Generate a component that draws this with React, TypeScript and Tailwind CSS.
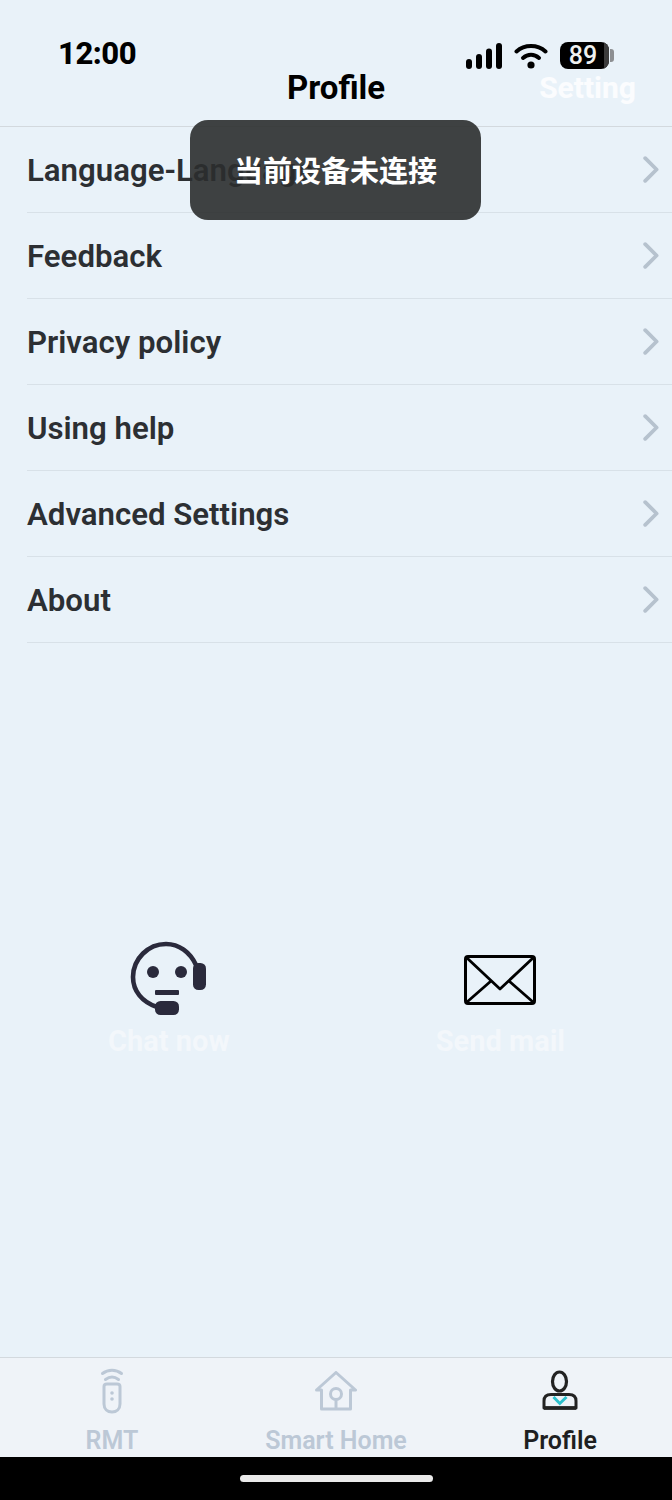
const rows = ["Language-Language", "Feedback", "Privacy policy", "Using help", "Advanced Settings", "About"];
const F = "font-['Roboto',sans-serif]";

function Chevron() {
  return (
    <svg width="16" height="27" viewBox="0 0 16 27" fill="none" stroke="#b6c2ce" strokeWidth="3.8" strokeLinecap="round" strokeLinejoin="round">
      <path d="M2.2 2.2L13.6 13.5L2.2 24.8" />
    </svg>
  );
}
function Signal() {
  return (
    <svg width="36" height="26" viewBox="0 0 36 26" fill="#000">
      <rect x="0" y="16" width="6" height="10" rx="3" />
      <rect x="10" y="11" width="6" height="15" rx="3" />
      <rect x="20" y="5.5" width="6" height="20.5" rx="3" />
      <rect x="30" y="0" width="6" height="26" rx="3" />
    </svg>
  );
}
function Wifi() {
  return (
    <svg width="34" height="26" viewBox="0 0 34 26" fill="none" stroke="#000" strokeLinecap="round">
      <path d="M2.5 8.5C10.5 1.2 23.5 1.2 31.5 8.5" strokeWidth="4" />
      <path d="M9 15C13.8 10.8 20.2 10.8 25 15" strokeWidth="4" />
      <circle cx="17" cy="22" r="3.6" fill="#000" stroke="none" />
    </svg>
  );
}
function Battery() {
  return (
    <div className="flex items-center">
      <div className={`relative flex h-[27px] w-[49px] items-center justify-center overflow-hidden rounded-[8px] bg-black ${F}`}>
        <span className="pr-[3px] text-[25px] font-medium leading-none text-[#eef0f0]">89</span>
        <div className="absolute right-0 top-0 h-full w-[5px] bg-[#3c3c3c]" />
      </div>
      <div className="ml-[1px] h-[13px] w-[4px] rounded-r-[3px] bg-[#8d8f92]" />
    </div>
  );
}
function Agent() {
  return (
    <svg width="78" height="76" viewBox="0 0 78 76" fill="none">
      <path d="M66 24C60 11 49 3 36 3C18 3 3 18 3 36C3 50 12 61 27 66" stroke="#2a2a3c" strokeWidth="4.6" strokeLinecap="round" />
      <rect x="63" y="22" width="13" height="27" rx="5.5" fill="#2a2a3c" />
      <circle cx="23" cy="31" r="6" fill="#2a2a3c" />
      <circle cx="51" cy="31" r="6" fill="#2a2a3c" />
      <rect x="25" y="49" width="24" height="5" rx="1" fill="#2a2a3c" />
      <rect x="25" y="60" width="24" height="14" rx="5.5" fill="#2a2a3c" />
    </svg>
  );
}
function Mail() {
  return (
    <svg width="72" height="50" viewBox="0 0 72 50" fill="none" stroke="#000" strokeLinejoin="round">
      <rect x="1.5" y="1.5" width="69" height="47" rx="2.5" strokeWidth="3" />
      <path d="M3 3L36 34L69 3" strokeWidth="2.8" />
      <path d="M27 26L3 47M45 26L69 47" strokeWidth="2.8" />
    </svg>
  );
}
function Remote() {
  return (
    <svg width="26" height="46" viewBox="0 0 26 46" fill="none" stroke="#bcc8d6" strokeWidth="3" strokeLinecap="round">
      <path d="M3.5 5.5C9 1 17 1 22.5 5.5" />
      <path d="M6.5 11.5C10.5 8.5 15.5 8.5 19.5 11.5" />
      <path d="M5 18.5C5 16.5 6 16 8 16H18C20 16 21 16.5 21 18.5V36C21 41 17.5 44 13 44C8.5 44 5 41 5 36Z" />
      <circle cx="13" cy="25" r="1.8" fill="#bcc8d6" stroke="none" />
      <circle cx="13" cy="31" r="1.8" fill="#bcc8d6" stroke="none" />
    </svg>
  );
}
function House() {
  return (
    <svg width="42" height="40" viewBox="0 0 42 40" fill="none" stroke="#bcc8d6" strokeWidth="3" strokeLinejoin="round">
      <path d="M1.5 19L21 1.5L40.5 19H35.5V38H6.5V19Z" />
      <circle cx="21" cy="23" r="5.5" />
      <path d="M21 28.5V38" />
    </svg>
  );
}
function Person() {
  return (
    <svg width="36" height="42" viewBox="0 0 36 42" fill="none">
      <ellipse cx="17.5" cy="11.5" rx="7" ry="9.5" stroke="#222" strokeWidth="3.2" />
      <path d="M2 38V31C2 26.5 5 24.5 9 24.5H27C31 24.5 34 26.5 34 31V38Z" stroke="#222" strokeWidth="3" strokeLinejoin="round" />
      <path d="M2 38H34" stroke="#222" strokeWidth="3.6" />
      <path d="M11.5 27L17.8 33.5L24.5 27" stroke="#2cc0cc" strokeWidth="3" />
    </svg>
  );
}

export default function App() {
  return (
    <div className={`relative flex h-[1500px] w-[672px] flex-col overflow-hidden bg-[#e9f2f9] ${F}`}>
      <header className="relative flex h-[127px] shrink-0 flex-col border-b border-[#d3d9de]">
        <div className="flex h-[69px] items-end justify-between pl-[58px] pr-[58px]">
          <span className="text-[31px] font-extrabold leading-[30px] tracking-[-0.5px] text-black">12:00</span>
          <div className="flex items-center gap-[12px]">
            <Signal />
            <Wifi />
            <Battery />
          </div>
        </div>
        <div className="relative flex h-[36px] items-center justify-center">
          <span className="text-[33px] font-bold leading-none text-black">Profile</span>
          <span className="absolute right-[36px] top-[1px] text-[30px] font-bold leading-[36px] text-white/80">Setting</span>
        </div>
      </header>

      <main className="flex flex-col pl-[27px]">
        {rows.map((r) => (
          <div key={r} className="flex h-[86px] items-center justify-between border-b border-[#d8e1e8] pr-[13px]">
            <span className="pt-[2px] text-[31.2px] font-semibold leading-none text-[#2c2f33]">{r}</span>
            <Chevron />
          </div>
        ))}
      </main>

      <div className="flex flex-1 items-start justify-between pl-[108px] pr-[107px] pt-[298px]">
        <div className="flex flex-col items-center">
          <div className="flex h-[76px] items-center"><Agent /></div>
          <span className="mt-[6px] text-[29px] font-bold leading-[36px] text-[#f3f7fb]">Chat now</span>
        </div>
        <div className="flex flex-col items-center">
          <div className="flex h-[76px] items-center pt-[2px]"><Mail /></div>
          <span className="mt-[6px] text-[29px] font-bold leading-[36px] text-[#f3f7fb]">Send mail</span>
        </div>
      </div>

      <nav className="grid h-[100px] shrink-0 grid-cols-3 border-t border-[#d3d9de] bg-[#eff3f8]">
        <div className="flex flex-col items-center pt-[10px]">
          <div className="flex h-[46px] items-center"><Remote /></div>
          <span className="mt-[12px] text-[25px] font-semibold leading-[30px] text-[#bcc8d6]">RMT</span>
        </div>
        <div className="flex flex-col items-center pt-[10px]">
          <div className="flex h-[46px] items-center"><House /></div>
          <span className="mt-[12px] text-[25px] font-semibold leading-[30px] text-[#bcc8d6]">Smart Home</span>
        </div>
        <div className="flex flex-col items-center pt-[10px]">
          <div className="flex h-[46px] items-center"><Person /></div>
          <span className="mt-[12px] text-[25px] font-semibold leading-[30px] text-[#1e1f21]">Profile</span>
        </div>
      </nav>
      <div className="flex h-[43px] shrink-0 justify-center bg-black pt-[18px]">
        <div className="h-[7px] w-[193px] rounded-full bg-[#eaeaea]" />
      </div>

      <div className="absolute left-[190px] top-[120px] flex h-[100px] w-[291px] items-center justify-center rounded-[18px] bg-[#2b2d2d]/90 pt-[6px] font-['Roboto','Noto_Sans_CJK_SC',sans-serif] text-[29px] font-bold text-white">
        当前设备未连接
      </div>
    </div>
  );
}
